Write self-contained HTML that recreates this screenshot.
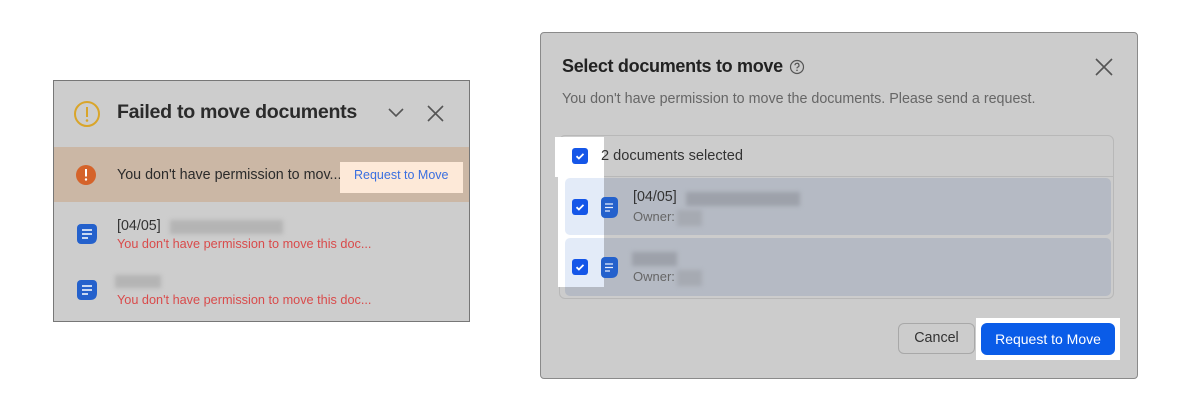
<!DOCTYPE html>
<html><head><meta charset="utf-8"><style>
*{margin:0;padding:0;box-sizing:border-box}
body{width:1184px;height:409px;background:#fff;position:relative;overflow:hidden;font-family:"Liberation Sans",Arial,sans-serif}
.a{position:absolute}
.blur{position:absolute;background:#b4b4b4;filter:blur(2px)}
</style></head><body>
<!-- left panel -->
<div class="a" style="left:53px;top:80px;width:417px;height:242px;background:#cdcdcd;border:1px solid #777"></div>
<svg class="a" style="left:73px;top:100px" width="28" height="28"><circle cx="14" cy="14" r="12" fill="none" stroke="#d9a52a" stroke-width="2"/><rect x="13" y="7" width="2" height="10" fill="#d9a52a"/><circle cx="14" cy="20.5" r="1.3" fill="#d9a52a"/></svg>
<div class="a" style="left:117px;top:101px;font-size:19.6px;font-weight:bold;color:#2b2b2b;letter-spacing:-0.3px">Failed to move documents</div>
<svg class="a" style="left:386px;top:104px" width="20" height="16"><path d="M3 5l7 7 7-7" fill="none" stroke="#555" stroke-width="1.6"/></svg>
<svg class="a" style="left:426px;top:104px" width="20" height="20"><path d="M2 2l15 15M17 2L2 17" fill="none" stroke="#555" stroke-width="1.6"/></svg>
<div class="a" style="left:54px;top:147px;width:415px;height:55px;background:#cbb7a5"></div>
<svg class="a" style="left:75px;top:164px" width="22" height="22"><circle cx="11" cy="11" r="10" fill="#d5632a"/><rect x="10" y="5" width="2" height="7.5" fill="#fff"/><circle cx="11" cy="15.5" r="1.2" fill="#fff"/></svg>
<div class="a" style="left:117px;top:167px;font-size:14.3px;color:#2b2b2b">You don't have permission to mov...</div>
<div class="a" style="left:340px;top:162px;width:123px;height:31px;background:#fde9d8"></div>
<div class="a" style="left:354px;top:168px;font-size:12.5px;color:#3a6fe0">Request to Move</div>
<svg class="a" style="left:77px;top:224px" width="20" height="20"><path d="M4 0h12a4 4 0 0 1 4 4v9q0 7-7 7H4a4 4 0 0 1-4-4V4a4 4 0 0 1 4-4z" fill="#2461cc"/><path d="M5 6h10M5 10h10M5 14h6" stroke="#fff" stroke-width="1.4"/></svg>
<div class="a" style="left:117px;top:218px;font-size:14.3px;color:#333">[04/05]</div>
<div class="blur" style="left:170px;top:220px;width:113px;height:14px"></div>
<div class="a" style="left:117px;top:237px;font-size:12.7px;color:#d94b4b">You don't have permission to move this doc...</div>
<svg class="a" style="left:77px;top:280px" width="20" height="20"><path d="M4 0h12a4 4 0 0 1 4 4v9q0 7-7 7H4a4 4 0 0 1-4-4V4a4 4 0 0 1 4-4z" fill="#2461cc"/><path d="M5 6h10M5 10h10M5 14h6" stroke="#fff" stroke-width="1.4"/></svg>
<div class="blur" style="left:115px;top:275px;width:46px;height:13px"></div>
<div class="a" style="left:117px;top:293px;font-size:12.7px;color:#d94b4b">You don't have permission to move this doc...</div>

<!-- right panel -->
<div class="a" style="left:540px;top:32px;width:598px;height:347px;background:#cccccc;border:1px solid #8a8a8a;border-radius:4px"></div>
<div class="a" style="left:562px;top:56px;font-size:18px;font-weight:bold;color:#222;letter-spacing:-0.3px">Select documents to move</div>
<svg class="a" style="left:789px;top:59px" width="16" height="16"><circle cx="8" cy="8" r="6.5" fill="none" stroke="#555" stroke-width="1.2"/><path d="M6 6.3a2 2 0 1 1 2.6 1.9c-.5.2-.6.5-.6 1.2" fill="none" stroke="#555" stroke-width="1.2"/><circle cx="8" cy="11.3" r=".8" fill="#555"/></svg>
<svg class="a" style="left:1095px;top:58px" width="18" height="18"><path d="M1 1l16 16M17 1L1 17" stroke="#555" stroke-width="1.6"/></svg>
<div class="a" style="left:562px;top:91px;font-size:14.3px;color:#666">You don't have permission to move the documents. Please send a request.</div>
<div class="a" style="left:559px;top:135px;width:555px;height:164px;border:1px solid #b8b8b8;border-radius:6px"></div>
<div class="a" style="left:560px;top:176px;width:553px;height:1px;background:#b8b8b8"></div>
<div class="a" style="left:565px;top:178px;width:546px;height:57px;background:#b5bac4;border-radius:5px"></div>
<div class="a" style="left:565px;top:238px;width:546px;height:58px;background:#b5bac4;border-radius:5px"></div>
<div class="a" style="left:555px;top:137px;width:49px;height:40px;background:#fff"></div>
<div class="a" style="left:558px;top:177px;width:46px;height:110px;background:#fff"></div>
<div class="a" style="left:565px;top:178px;width:39px;height:57px;background:#e3ebf8;border-radius:5px 0 0 5px"></div>
<div class="a" style="left:565px;top:238px;width:39px;height:49px;background:#e3ebf8;border-radius:5px 0 0 0"></div>
<svg class="a" style="left:572px;top:148px" width="16" height="16"><rect width="16" height="16" rx="3" fill="#1556e8"/><path d="M4.5 8.2l2.4 2.3 4.6-4.6" fill="none" stroke="#fff" stroke-width="1.8"/></svg>
<svg class="a" style="left:572px;top:199px" width="16" height="16"><rect width="16" height="16" rx="3" fill="#1556e8"/><path d="M4.5 8.2l2.4 2.3 4.6-4.6" fill="none" stroke="#fff" stroke-width="1.8"/></svg>
<svg class="a" style="left:572px;top:259px" width="16" height="16"><rect width="16" height="16" rx="3" fill="#1556e8"/><path d="M4.5 8.2l2.4 2.3 4.6-4.6" fill="none" stroke="#fff" stroke-width="1.8"/></svg>
<div class="a" style="left:601px;top:148px;font-size:14.6px;color:#333">2 documents selected</div>
<svg class="a" style="left:601px;top:197px" width="17" height="21"><path d="M4 0h9a4 4 0 0 1 4 4v10q0 7-7 7H4a4 4 0 0 1-4-4V4a4 4 0 0 1 4-4z" fill="#2461cc"/><path d="M4 7h8M4 10.5h8M4 14h5" stroke="#e8eefc" stroke-width="1.3"/></svg>
<svg class="a" style="left:601px;top:257px" width="17" height="21"><path d="M4 0h9a4 4 0 0 1 4 4v10q0 7-7 7H4a4 4 0 0 1-4-4V4a4 4 0 0 1 4-4z" fill="#2461cc"/><path d="M4 7h8M4 10.5h8M4 14h5" stroke="#e8eefc" stroke-width="1.3"/></svg>
<div class="a" style="left:633px;top:189px;font-size:14.3px;color:#333">[04/05]</div>
<div class="blur" style="left:686px;top:192px;width:114px;height:14px;background:#9da1aa"></div>
<div class="a" style="left:633px;top:209px;font-size:13px;color:#666">Owner:</div>
<div class="blur" style="left:677px;top:210px;width:25px;height:16px;background:#a6aab2"></div>
<div class="blur" style="left:632px;top:252px;width:45px;height:14px;background:#9da1aa"></div>
<div class="a" style="left:633px;top:269px;font-size:13px;color:#666">Owner:</div>
<div class="blur" style="left:677px;top:270px;width:25px;height:16px;background:#a6aab2"></div>
<div class="a" style="left:898px;top:323px;width:77px;height:31px;border:1px solid #a8a8a8;border-radius:6px;font-size:14.3px;color:#333;text-align:center;line-height:29px">Cancel</div>
<div class="a" style="left:976px;top:318px;width:144px;height:42px;background:#fff"></div>
<div class="a" style="left:981px;top:323px;width:134px;height:32px;background:#0a5ce8;border-radius:6px;font-size:14px;color:#fff;text-align:center;line-height:32px">Request to Move</div>
</body></html>
